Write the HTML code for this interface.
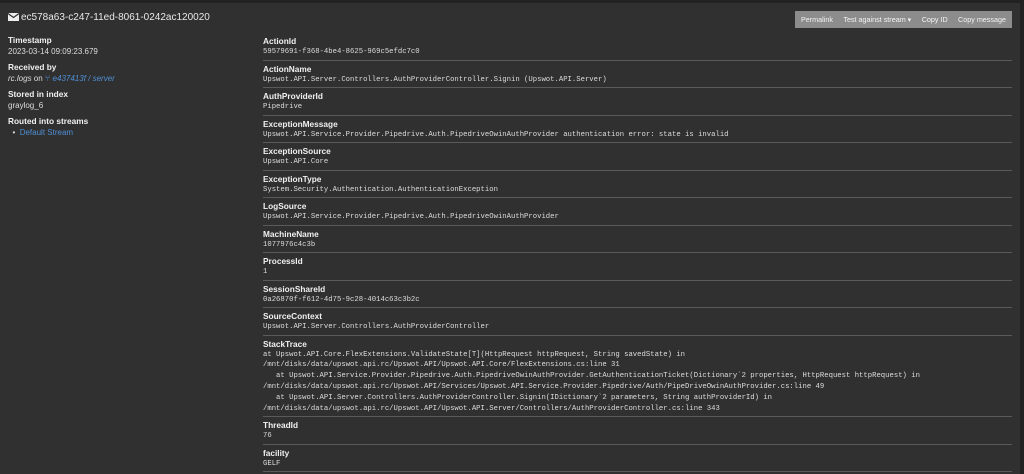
<!DOCTYPE html>
<html><head><meta charset="utf-8"><style>
html,body{margin:0;padding:0;background:#222;width:1024px;height:474px;overflow:hidden}
.panel{position:absolute;left:0;top:3px;width:1020px;height:471px;background:#303030;font-family:"Liberation Sans",sans-serif;color:#ddd}
.title{position:absolute;left:8px;top:9px;font-size:10px;color:#e8e8e8;white-space:nowrap}
.title svg{vertical-align:-1px;margin-right:2px}
.btns{position:absolute;left:795px;top:8px;width:217px;height:17px;background:#8c8c8c;font-size:7.2px;color:#f4f4f4;display:flex;align-items:center;white-space:nowrap;justify-content:space-between;padding:0 4px;box-sizing:border-box}
.btns span{padding:0 2px}
.left{position:absolute;left:8px;top:32px;font-size:8px;width:240px}
.left b{display:block;color:#f0f0f0;font-size:8.3px;line-height:11px}
.left .v{line-height:11px;margin-bottom:5px;color:#ddd}
a{color:#4f8fd6;text-decoration:none}
.right{position:absolute;left:263px;top:30px;width:749px}
.row{padding:3px 0 1.5px;border-bottom:1px solid #5a5a5a}
.row b{display:block;font-size:8.3px;line-height:11px;color:#f0f0f0}
.row .m{font-family:"Liberation Mono",monospace;font-size:7.25px;line-height:11px;color:#ddd;white-space:pre}
.row .t{line-height:10.9px}
</style></head><body><div class="panel">
<div class="title"><svg width="11" height="8" viewBox="0 0 11 8"><rect x="0" y="0" width="11" height="8" fill="#eee"/><path d="M0 0.5 L5.5 4.5 L11 0.5" stroke="#303030" stroke-width="1.2" fill="none"/></svg>ec578a63-c247-11ed-8061-0242ac120020</div>
<div class="btns"><span>Permalink</span><span>Test against stream ▾</span><span>Copy ID</span><span>Copy message</span></div>
<div class="left">
<b>Timestamp</b><div class="v">2023-03-14 09:09:23.679</div>
<b>Received by</b><div class="v"><i>rc.logs</i> on <a><span style="font-size:9px">⑂</span> <i>e437413f / server</i></a></div>
<b>Stored in index</b><div class="v">graylog_6</div>
<b>Routed into streams</b><div class="v">&nbsp;&nbsp;•&nbsp;&nbsp;<a>Default Stream</a></div>
</div>
<div class="right">
<div class="row"><b>ActionId</b><div class="m">59579691-f368-4be4-8625-969c5efdc7c0</div></div>
<div class="row"><b>ActionName</b><div class="m">Upswot.API.Server.Controllers.AuthProviderController.Signin (Upswot.API.Server)</div></div>
<div class="row"><b>AuthProviderId</b><div class="m">Pipedrive</div></div>
<div class="row"><b>ExceptionMessage</b><div class="m">Upswot.API.Service.Provider.Pipedrive.Auth.PipedriveOwinAuthProvider authentication error: state is invalid</div></div>
<div class="row"><b>ExceptionSource</b><div class="m">Upswot.API.Core</div></div>
<div class="row"><b>ExceptionType</b><div class="m">System.Security.Authentication.AuthenticationException</div></div>
<div class="row"><b>LogSource</b><div class="m">Upswot.API.Service.Provider.Pipedrive.Auth.PipedriveOwinAuthProvider</div></div>
<div class="row"><b>MachineName</b><div class="m">1077976c4c3b</div></div>
<div class="row"><b>ProcessId</b><div class="m">1</div></div>
<div class="row"><b>SessionShareId</b><div class="m">0a26870f-f612-4d75-9c28-4014c63c3b2c</div></div>
<div class="row"><b>SourceContext</b><div class="m">Upswot.API.Server.Controllers.AuthProviderController</div></div>
<div class="row"><b>StackTrace</b><div class="m t">at Upswot.API.Core.FlexExtensions.ValidateState[T](HttpRequest httpRequest, String savedState) in
/mnt/disks/data/upswot.api.rc/Upswot.API/Upswot.API.Core/FlexExtensions.cs:line 31
   at Upswot.API.Service.Provider.Pipedrive.Auth.PipedriveOwinAuthProvider.GetAuthenticationTicket(Dictionary`2 properties, HttpRequest httpRequest) in
/mnt/disks/data/upswot.api.rc/Upswot.API/Services/Upswot.API.Service.Provider.Pipedrive/Auth/PipeDriveOwinAuthProvider.cs:line 49
   at Upswot.API.Server.Controllers.AuthProviderController.Signin(IDictionary`2 parameters, String authProviderId) in
/mnt/disks/data/upswot.api.rc/Upswot.API/Upswot.API.Server/Controllers/AuthProviderController.cs:line 343</div></div>
<div class="row"><b>ThreadId</b><div class="m">76</div></div>
<div class="row"><b>facility</b><div class="m">GELF</div></div>
</div>
</div></body></html>
